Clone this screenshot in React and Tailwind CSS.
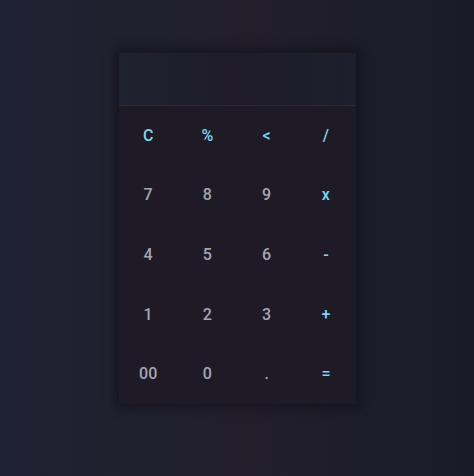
import React, { useState } from 'react';

const keys = [
  { label: 'C', op: true },
  { label: '%', op: true },
  { label: '<', op: true },
  { label: '/', op: true },
  { label: '7' },
  { label: '8' },
  { label: '9' },
  { label: 'x', op: true },
  { label: '4' },
  { label: '5' },
  { label: '6' },
  { label: '-', op: true },
  { label: '1' },
  { label: '2' },
  { label: '3' },
  { label: '+', op: true },
  { label: '00' },
  { label: '0' },
  { label: '.' },
  { label: '=', op: true },
];

const App = () => {
  const [display, setDisplay] = useState('');

  const press = (k) => {
    if (k === 'C') return setDisplay('');
    if (k === '<') return setDisplay((d) => d.slice(0, -1));
    if (k === '=') {
      try {
        // eslint-disable-next-line no-new-func
        const v = Function(`return (${display.replace(/x/g, '*')})`)();
        setDisplay(String(v));
      } catch (e) {
        setDisplay('');
      }
      return;
    }
    setDisplay((d) => d + k);
  };

  return (
    <div
      className="min-h-[476px] w-full flex justify-center bg-gradient-to-r from-[#1f2233] via-[#221f2b] to-[#191c27] pt-[53px]"
      style={{ fontFamily: 'Roboto, "Noto Sans", sans-serif' }}
    >
      <div className="w-[237px] h-[351px] flex flex-col bg-[#1e1b26] shadow-[0_0_10px_3px_rgba(10,10,16,0.55)]">
        {/* display */}
        <div className="h-[53px] shrink-0 flex items-center justify-end px-4 text-2xl text-gray-300 border-b border-[#2c2a35] bg-gradient-to-r from-[#1f2230] via-[#1f1c28] to-[#1c202c]">
          {display}
        </div>

        {/* keys */}
        <div className="flex-1 grid grid-cols-4 grid-rows-5">
          {keys.map((k) => (
            <button
              key={k.label}
              onClick={() => press(k.label)}
              className={`flex items-center justify-center text-[16px] font-medium cursor-pointer ${
                k.op ? 'text-[#7fd6ee]' : 'text-[#a6a6ae]'
              }`}
            >
              {k.label}
            </button>
          ))}
        </div>
      </div>
    </div>
  );
};

export default App;
